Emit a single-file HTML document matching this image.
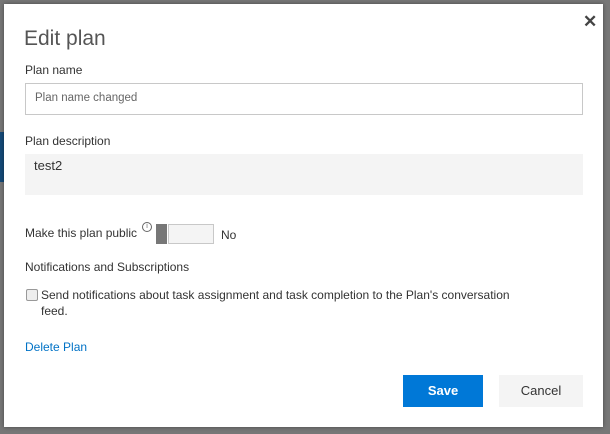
<!DOCTYPE html>
<html><head><style>
body{margin:0;width:610px;height:434px;background:#777;position:relative;overflow:hidden;font-family:"Segoe UI","Liberation Sans",sans-serif;color:#333}
.d{position:absolute;left:4px;top:4px;width:599px;height:423px;background:#fff;box-shadow:0 0 4px rgba(0,0,0,.4)}
.a{position:absolute;white-space:nowrap}
.l{font-size:12px;color:#333}
</style></head><body>
<div class="a" style="left:0;top:132px;width:4px;height:50px;background:#154a78"></div>
<div class="d"></div>
<div class="a" style="left:583px;top:12px;font-size:17px;font-weight:bold;color:#444">✕</div>
<div class="a" style="left:24px;top:27px;font-size:21px;font-weight:300;color:#555">Edit plan</div>
<div class="a l" style="left:25px;top:63px">Plan name</div>
<div class="a" style="left:25px;top:83px;width:556px;height:30px;border:1px solid #c8c8c8"></div>
<div class="a" style="left:35px;top:92px;font-size:11.5px;color:#666">Plan name changed</div>
<div class="a l" style="left:25px;top:134px">Plan description</div>
<div class="a" style="left:25px;top:154px;width:558px;height:41px;background:#f4f4f4"></div>
<div class="a" style="left:34px;top:158px;font-size:13px;color:#333">test2</div>
<div class="a l" style="left:25px;top:226px">Make this plan public</div>
<div class="a" style="left:142px;top:222px;width:8px;height:8px;border:1px solid #666;border-radius:50%;font-size:7px;line-height:8px;text-align:center;color:#666">i</div>
<div class="a" style="left:156px;top:224px;width:11px;height:20px;background:#777"></div>
<div class="a" style="left:168px;top:224px;width:44px;height:18px;border:1px solid #c8c8c8;background:#f4f4f4"></div>
<div class="a" style="left:221px;top:228px;font-size:12px">No</div>
<div class="a l" style="left:25px;top:260px">Notifications and Subscriptions</div>
<div class="a" style="left:26px;top:289px;width:10px;height:10px;border:1px solid #999;border-radius:2px;background:#eee"></div>
<div class="a l" style="left:41px;top:287px;line-height:16px">Send notifications about task assignment and task completion to the Plan's conversation<br>feed.</div>
<div class="a" style="left:25px;top:340px;font-size:12px;color:#0072c6">Delete Plan</div>
<div class="a" style="left:403px;top:375px;width:80px;height:32px;background:#0078d7;color:#fff;font-size:13px;font-weight:600;line-height:32px;text-align:center">Save</div>
<div class="a" style="left:499px;top:375px;width:84px;height:32px;background:#f4f4f4;color:#333;font-size:13px;line-height:32px;text-align:center">Cancel</div>
</body></html>
